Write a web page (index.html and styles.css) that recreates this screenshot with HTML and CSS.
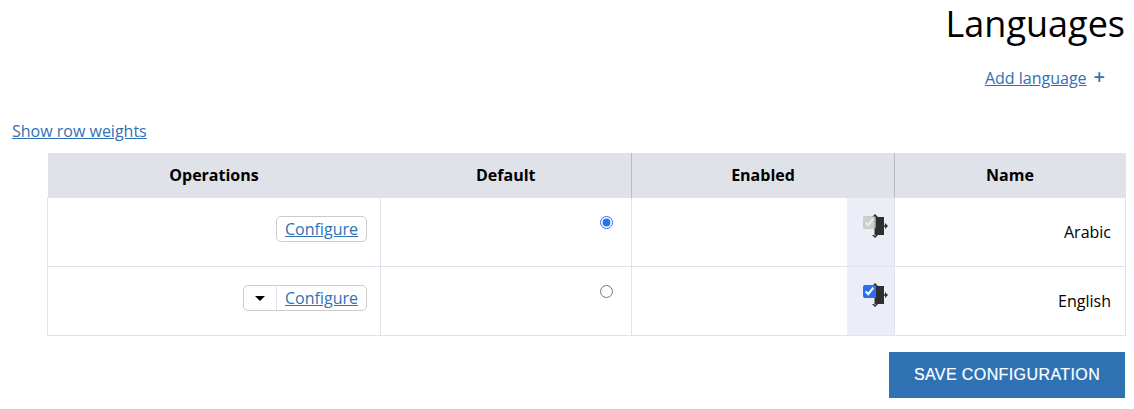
FILE: index.html
```html
<!DOCTYPE html>
<html>
<head>
  <title>Languages</title>
  <link rel="stylesheet" href="styles.css">
</head>
<body>
  <h1 class="title">Languages</h1>
  <p class="actions"><a href="#">Add language</a><span class="plus">+</span></p>
  <p class="weights"><a href="#">Show row weights</a></p>
  <table class="lang-table">
    <colgroup>
      <col class="w-ops">
      <col class="w-default">
      <col class="w-enabled">
      <col class="w-drag">
      <col class="w-name">
    </colgroup>
    <thead>
      <tr>
        <th>Operations</th>
        <th class="col-default">Default</th>
        <th colspan="2">Enabled</th>
        <th class="col-name">Name</th>
      </tr>
    </thead>
    <tbody>
      <tr>
        <td class="ops">
          <div class="ops-wrap">
            <span class="dropbutton"><a href="#">Configure</a></span>
          </div>
        </td>
        <td class="default"><input type="radio" name="site_default" checked></td>
        <td class="enabled"></td>
        <td class="drag">
          <div class="drag-wrap">
            <svg class="handle" width="18" height="24" viewBox="0 0 18 24">
              <rect x="5" y="3" width="9" height="18" fill="#2f2f2f"/>
              <path d="M5 0 8 3H2Z M5 24 8 21H2Z M4.500 2H5.500V22H4.500Z" fill="#2f2f2f"/>
              <path d="M14 11.200H15V9L18 12 15 15V12.800H14Z" fill="#2f2f2f"/>
            </svg>
            <input class="check" type="checkbox" checked disabled>
          </div>
        </td>
        <td class="name">Arabic</td>
      </tr>
      <tr>
        <td class="ops">
          <div class="ops-wrap">
            <span class="dropbutton">
              <span class="toggle"><span class="caret"></span></span>
              <a href="#">Configure</a>
            </span>
          </div>
        </td>
        <td class="default"><input type="radio" name="site_default"></td>
        <td class="enabled"></td>
        <td class="drag">
          <div class="drag-wrap">
            <svg class="handle" width="18" height="24" viewBox="0 0 18 24">
              <rect x="5" y="3" width="9" height="18" fill="#2f2f2f"/>
              <path d="M5 0 8 3H2Z M5 24 8 21H2Z M4.500 2H5.500V22H4.500Z" fill="#2f2f2f"/>
              <path d="M14 11.200H15V9L18 12 15 15V12.800H14Z" fill="#2f2f2f"/>
            </svg>
            <input class="check" type="checkbox" checked>
          </div>
        </td>
        <td class="name">English</td>
      </tr>
    </tbody>
  </table>
  <div class="form-actions">
    <button class="save">SAVE CONFIGURATION</button>
  </div>
</body>
</html>
```

FILE: styles.css
```css
body {
  font-family: "Open Sans", sans-serif;
  font-size: 16px;
  margin: 0;
  padding: 0 9px 0 12px;
  color: #000000;
  background: #FFFFFF;
}
a {
  color: #2E72B4;
}
.title {
  font-size: 36px;
  font-weight: 400;
  line-height: 46px;
  margin: 0;
  padding-top: 1px;
  text-align: right;
  height: 46px;
}
.actions {
  margin: 19px 20px 0 0;
  line-height: 25px;
  text-align: right;
}
.plus {
  color: #2E72B4;
  font-size: 20px;
  font-weight: 600;
  line-height: 20px;
  margin-left: 7px;
}
.weights {
  margin: 28px 0 0 0;
  line-height: 25px;
}
.lang-table {
  border-collapse: collapse;
  table-layout: fixed;
  width: 1078px;
  margin: 9px 0 0 35px;
}
.w-ops { width: 333px; }
.w-default { width: 251px; }
.w-enabled { width: 215px; }
.w-drag { width: 48px; }
.w-name { width: 231px; }
th {
  background: #DFE2E9;
  font-weight: 700;
  height: 44px;
  padding: 0;
  font-size: 16px;
}
.col-default { border-right: 1px solid #B9BCBC; }
.col-name { border-left: 1px solid #B9BCBC; border-right: 1px solid #E2E3EA; }
td {
  height: 68px;
  padding: 0;
  border: 1px solid #E2E3EA;
  vertical-align: top;
}
.ops {
  height: 50px;
  padding: 18px 13px 0 0;
}
.ops-wrap {
  display: flex;
  justify-content: flex-end;
}
.dropbutton {
  display: flex;
  align-items: center;
  height: 24px;
  border: 1px solid #CCCCCC;
  border-radius: 5px;
  line-height: 22px;
}
.dropbutton a {
  padding: 0 8px 0 8px;
}
.toggle {
  display: flex;
  align-items: center;
  justify-content: center;
  width: 32px;
  height: 24px;
  border-right: 1px solid #E2E3EA;
}
.caret {
  width: 0;
  height: 0;
  border-left: 5px solid transparent;
  border-right: 5px solid transparent;
  border-top: 5px solid #000000;
}
.default {
  height: 50px;
  padding: 18px 18px 0 0;
}
input[type="radio"] {
  display: block;
  width: 13px;
  height: 13px;
  margin: 0 0 0 auto;
  accent-color: #2A6FF0;
}
.drag {
  background: #EBEEF6;
  border-left: 0;
}
.enabled {
  border-right: 0;
}
.drag-wrap {
  position: relative;
  height: 30px;
  margin-top: 16px;
}
.handle {
  position: absolute;
  left: 23px;
  top: 0;
}
.check {
  position: absolute;
  left: 16px;
  top: 2px;
  width: 13px;
  height: 13px;
  margin: 0;
  accent-color: #2A6FF0;
}
.name {
  height: 45px;
  padding: 23px 14px 0 0;
  text-align: right;
}
.form-actions {
  display: flex;
  justify-content: flex-end;
  margin-top: 16px;
}
.save {
  width: 236px;
  height: 46px;
  border: 0;
  background: #2E72B4;
  color: #FFFFFF;
  font-family: "Liberation Sans", sans-serif;
  font-size: 16px;
  font-weight: 400;
  letter-spacing: 0.4px;
  -webkit-text-stroke: 0.2px #FFFFFF;
  padding: 0;
}
```
